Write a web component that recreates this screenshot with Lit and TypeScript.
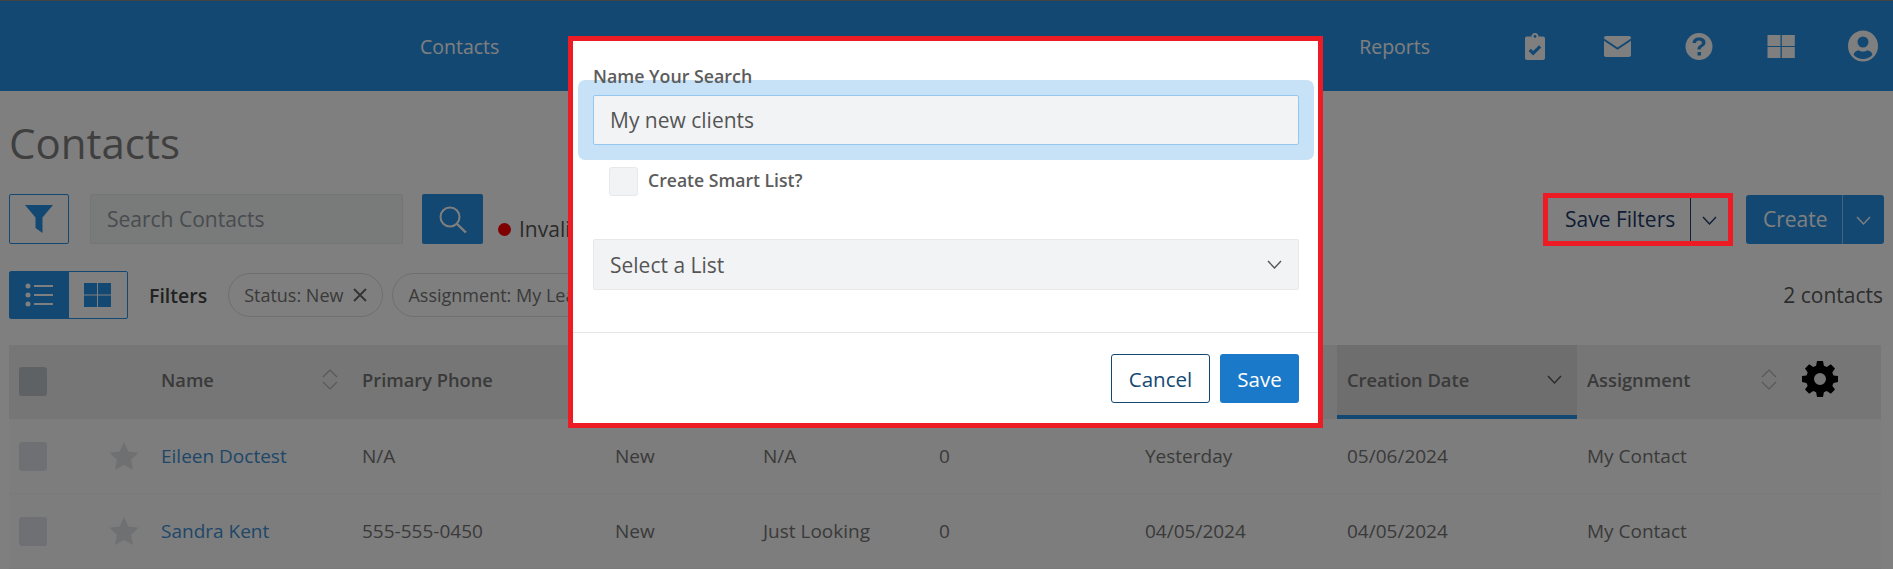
import { LitElement, html, css, svg } from "lit";
import { customElement } from "lit/decorators.js";

const chev = () => html`<svg class="chev" width="15" height="9" viewBox="0 0 15 9"><path d="M1 1l6.500 7L14 1" fill="none" stroke="currentColor" stroke-width="1.400"/></svg>`;
const sort = html`<svg class="sort" width="16" height="21" viewBox="0 0 16 21"><path d="M1 8l7-7 7 7M1 13l7 7 7-7" fill="none" stroke="currentColor" stroke-width="1.200"/></svg>`;
const star = svg`<path d="M15 0l4.400 9.400 10.100 1.300-7.400 7.100 1.900 10.200L15 23l-9 5 1.900-10.200L.5 10.700l10.100-1.300z" fill="currentColor"/>`;
const closeX = html`<svg width="14" height="14" viewBox="0 0 14 14"><path d="M1 1l12 12M13 1L1 13" stroke="#666" stroke-width="1.800"/></svg>`;

type Col = { label?: string; sort?: boolean };
const columns: Col[] = [
  { label: "Name", sort: true },
  { label: "Primary Phone" },
  {},
  {},
  {},
  {},
];
const rows = [
  ["Eileen Doctest", "N/A", "New", "N/A", "0", "Yesterday", "05/06/2024", "My Contact"],
  ["Sandra Kent", "555-555-0450", "New", "Just Looking", "0", "04/05/2024", "04/05/2024", "My Contact"],
];

@customElement("app-root")
export class AppRoot extends LitElement {
  static styles = css`
    :host { display: block; position: relative; width: 1893px; height: 569px; overflow: hidden; background: #fff; font-family: "Open Sans", "Noto Sans", sans-serif; color: #757575; font-size: 19px; }
    * { box-sizing: border-box; }
    .top { height: 91px; background: #2690e4; border-top: 1px solid #888; display: flex; align-items: center; color: #fff; font-size: 19.500px; padding: 0 14px 0 420px; }
    .nav { width: 1010px; display: flex; justify-content: space-between; }
    .icons { margin-left: 90px; display: flex; gap: 52px; align-items: center; color: #fff; }
    .icons svg { width: 30px; height: 32px; display: block; fill: currentColor; }
    .title { height: 103px; padding-left: 9px; display: flex; align-items: center; font-size: 42px; color: #807e7e; font-weight: 400; margin: 0; }
    .tools { display: flex; height: 50px; padding: 0 9px; align-items: stretch; }
    .filter-btn { width: 60px; border: 1px solid #2690e4; border-radius: 2px; display: flex; align-items: center; justify-content: center; color: #2690e4; }
    .search { width: 313px; margin-left: 21px; background: #f2f5f4; border: 1px solid #e8ecec; border-radius: 2px; padding-left: 16px; display: flex; align-items: center; font-size: 21px; color: #8e989f; }
    .search-btn { width: 61px; margin-left: 19px; background: #2690e4; border-radius: 2px; display: flex; align-items: center; justify-content: center; }
    .invalid { margin-left: 15px; display: flex; align-items: center; gap: 8px; padding-top: 20px; font-size: 21px; color: #555; }
    .dot { width: 13px; height: 13px; border-radius: 50%; background: #ff0000; }
    .right { margin-left: auto; display: flex; gap: 18px; align-items: center; }
    .split { display: flex; align-items: center; height: 49px; font-size: 21px; border-radius: 3px; }
    .split .main { height: 100%; display: flex; align-items: center; }
    .split .more { height: 100%; display: flex; align-items: center; justify-content: center; padding-top: 3px; }
    .save-f { width: 180px; color: #223a6a; }
    .save-f .main { width: 143px; padding-left: 17px; border-right: 1px solid #223a6a; }
    .save-f .more { width: 37px; }
    .create { width: 138px; background: #2690e4; color: #fff; }
    .create .main { width: 97px; padding-left: 17px; border-right: 1px solid #8dc4ee; }
    .create .more { width: 41px; }
    .filters { display: flex; align-items: center; height: 48px; margin-top: 27px; padding: 0 10px 0 9px; }
    .toggle { display: flex; width: 119px; height: 48px; border: 1px solid #2690e4; border-radius: 2px; }
    .toggle span { flex: 1; display: flex; align-items: center; justify-content: center; }
    .toggle .on { background: #2690e4; }
    .ftitle { margin-left: 21px; font-weight: 600; color: #444; font-size: 19.500px; }
    .chip { height: 44px; border: 1px solid #dedede; border-radius: 22px; display: flex; align-items: center; gap: 10px; padding: 0 15px; font-size: 18px; color: #757575; white-space: nowrap; }
    .chip1 { margin-left: 21px; }
    .chip2 { margin-left: 9px; }
    .chip svg { display: block; }
    .count { margin-left: auto; font-size: 21px; color: #5a5a5a; }
    .table { margin: 26px 12px 0 9px; display: grid; grid-template-columns: 100px 42px 201px 253px 148px 176px 206px 202px 240px 304px; background: #fafafa; }
    .cell { display: flex; align-items: center; padding-left: 10px; white-space: nowrap; height: 75px; border-bottom: 1px solid #f5f5f5; }
    .hd { height: 74px; background: #ececec; border: 0; font-weight: 600; color: #747474; justify-content: space-between; padding-right: 10px; font-size: 18.300px; padding-bottom: 6px; }
    .hd.sel { background: #dcdcdc; border-bottom: 4px solid #2690e4; padding-bottom: 2px; }
    .hd .chev { color: #555; margin-right: 5px; }
    .sort { color: #b0b0b0; flex: none; margin-right: 4px; }
    .box { width: 28px; height: 29px; border-radius: 3px; background: #dee0e6; }
    .hd .box { background: #bec4ca; margin-top: 4px; }
    .last { justify-content: flex-start; padding-right: 0; }
    .last span { width: 174px; flex: none; }
    .last .sort { margin: 0; }
    .gear { flex: none; margin-left: 25px; display: block; }
    .star { color: #dfe1e5; padding-left: 0; }
    .link { color: #3d8fd4; }
    .overlay { position: absolute; inset: 0; background: rgba(0,0,0,.5); }
    .frame { position: absolute; left: 1543px; top: 193px; width: 190px; height: 53px; border: 5px solid #ed1c24; }
    .modal { position: absolute; left: 568px; top: 36px; width: 755px; height: 392px; background: #fff; border: 5px solid #ed1c24; color: #555; }
    .form { padding: 22px 19px 0 20px; }
    .form label { display: block; position: relative; z-index: 1; height: 26px; line-height: 26px; font-weight: 600; font-size: 17.800px; color: #5c5c5c; }
    .input { margin-top: 6px; height: 50px; background: #f2f3f5; border: 1px solid #93c6f0; border-radius: 2px; box-shadow: 0 0 0 15px #c7e2f7; display: flex; align-items: center; padding-left: 16px; font-size: 21px; color: #555; }
    .cb { margin: 22px 0 0 16px; height: 29px; display: flex; align-items: center; gap: 10px; font-weight: 600; font-size: 17.600px; color: #5c5c5c; position: relative; }
    .cb i { display: block; width: 29px; height: 29px; background: #f2f3f5; border: 1px solid #e6e8ea; border-radius: 3px; }
    .cb span { padding-bottom: 3px; }
    .select { margin-top: 43px; height: 51px; background: #f2f3f5; border: 1px solid #e6e8ea; border-radius: 2px; display: flex; align-items: center; justify-content: space-between; padding: 0 16px; font-size: 21px; color: #555; }
    .foot { margin-top: 42px; border-top: 1px solid #e6e6e6; padding: 21px 19px 0 0; display: flex; justify-content: flex-end; gap: 10px; }
    .btn { height: 49px; display: flex; align-items: center; justify-content: center; border-radius: 3px; font-size: 20.500px; }
    .cancel { width: 99px; border: 1px solid #134872; color: #134872; background: #fff; }
    .save { width: 79px; background: #1a79c8; color: #fff; }
  `;

  render() {
    return html`
      <div class="top">
        <div class="nav"><span>Contacts</span><span>Reports</span></div>
        <div class="icons">
          <svg viewBox="0 0 30 32"><path fill-rule="evenodd" d="M7 6.500h4.500C11.500 4.500 13 3 15 3s3.500 1.500 3.500 3.500H23c1.200 0 2 .8 2 2V28c0 1.200-.8 2-2 2H7c-1.200 0-2-.8-2-2V8.500c0-1.200.8-2 2-2zM15 5a1.400 1.400 0 100 2.800A1.400 1.400 0 0015 5zM13.200 25.500l8-8-2.200-2.200-5.800 5.800-2.400-2.400-2.200 2.200z"/></svg>
          <svg viewBox="0 0 30 32"><path d="M4 6h23c1.100 0 2 .9 2 2v.5L15.500 17.500 2 8.500V8c0-1.100.9-2 2-2zM2 10.800l13.500 9 13.500-9V25c0 1.100-.9 2-2 2H4c-1.100 0-2-.9-2-2z"/></svg>
          <svg viewBox="0 0 30 32"><path fill-rule="evenodd" d="M15 3a13.500 13.500 0 110 27 13.500 13.500 0 010-27zM12 13c0-1.500 1.200-2.500 3-2.500s3 1 3 2.300c0 2.400-4.500 2.500-4.500 6.200v.5h3.200v-.5c0-2 4.800-2.600 4.800-6.500 0-3.200-2.700-5-6.500-5-3.700 0-6.300 2-6.500 5.500zM13.500 22v3.500H17V22z"/></svg>
          <svg viewBox="0 0 30 32"><path d="M1.500 5h13v11h-13zM15.800 5h13v11h-13zM1.500 17h13v11h-13zM15.800 17h13v11h-13z"/></svg>
          <svg viewBox="0 0 30 32"><path fill-rule="evenodd" d="M15 .5a15 15.500 0 110 31 15 15.500 0 010-31zM15 6.500a5.500 5.500 0 100 11 5.500 5.500 0 000-11zM5.500 24.500c2 2.800 5.500 4.500 9.500 4.500s7.500-1.700 9.500-4.500c-1-2.500-3-4-5-4.200-1.200.8-2.800 1.200-4.500 1.200s-3.300-.4-4.500-1.200c-2 .2-4 1.700-5 4.200z"/></svg>
        </div>
      </div>
      <h1 class="title">Contacts</h1>
      <div class="tools">
        <div class="filter-btn"><svg width="28" height="28" viewBox="0 0 28 28"><path d="M0 0h28L17.500 12.500V28l-7-5V12.500z" fill="currentColor"/></svg></div>
        <div class="search">Search Contacts</div>
        <div class="search-btn"><svg width="28" height="27" viewBox="0 0 28 27"><circle cx="11" cy="11" r="9.500" fill="none" stroke="#fff" stroke-width="2"/><path d="M18 18l9 8.500" stroke="#fff" stroke-width="2.400"/></svg></div>
        <div class="invalid"><span class="dot"></span><span>Invalid</span></div>
        <div class="right">
          <div class="split save-f"><span class="main">Save Filters</span><span class="more">${chev()}</span></div>
          <div class="split create"><span class="main">Create</span><span class="more">${chev()}</span></div>
        </div>
      </div>
      <div class="filters">
        <div class="toggle">
          <span class="on"><svg width="28" height="24" viewBox="0 0 28 24"><g fill="#fff"><circle cx="3" cy="3" r="2.500"/><circle cx="3" cy="12" r="2.500"/><circle cx="3" cy="21" r="2.500"/><path d="M9 2h19v2H9zM9 11h19v2H9zM9 20h19v2H9z"/></g></svg></span>
          <span><svg width="27" height="24" viewBox="0 0 27 24" fill="#2690e4"><path d="M0 0h13v11.500H0zM14 0h13v11.500H14zM0 12.500h13V24H0zM14 12.500h13V24H14z"/></svg></span>
        </div>
        <span class="ftitle">Filters</span>
        <div class="chip chip1">Status: New${closeX}</div>
        <div class="chip chip2">Assignment: My Leads${closeX}</div>
        <span class="count">2 contacts</span>
      </div>
      <div class="table">
        <div class="cell hd"><div class="box"></div></div>
        <div class="cell hd"></div>
        ${columns.map(c => html`<div class="cell hd"><span>${c.label ?? ""}</span>${c.sort ? sort : ""}</div>`)}
        <div class="cell hd sel"><span>Creation Date</span>${chev()}</div>
        <div class="cell hd last"><span>Assignment</span>${sort}
          <svg class="gear" width="36" height="36" viewBox="0 0 24 24"><path fill="#000" fill-rule="evenodd" d="M10 0h4l.6 3.200 1.900.8L19.200 2.200 22 5l-1.800 2.700.8 1.900L24 10v4l-3 .6-.8 1.900L22 19l-2.800 2.800-2.700-1.800-1.900.8L14 24h-4l-.6-3.200-1.900-.8L4.800 21.800 2 19l1.800-2.500-.8-1.900L0 14v-4l3-.4.8-1.900L2 5l2.800-2.800L7.500 4l1.900-.8zM12 8a4 4 0 100 8 4 4 0 000-8z"/></svg>
        </div>
        ${rows.map(r => html`
          <div class="cell"><div class="box"></div></div>
          <div class="cell star"><svg width="30" height="28" viewBox="0 0 30 28">${star}</svg></div>
          <div class="cell link">${r[0]}</div>
          ${r.slice(1).map(v => html`<div class="cell">${v}</div>`)}
        `)}
      </div>
      <div class="overlay">
        <div class="frame"></div>
        <div class="modal">
          <div class="form">
            <label>Name Your Search</label>
            <div class="input">My new clients</div>
            <div class="cb"><i></i><span>Create Smart List?</span></div>
            <div class="select"><span>Select a List</span>${chev()}</div>
          </div>
          <div class="foot">
            <div class="btn cancel">Cancel</div>
            <div class="btn save">Save</div>
          </div>
        </div>
      </div>
    `;
  }
}
